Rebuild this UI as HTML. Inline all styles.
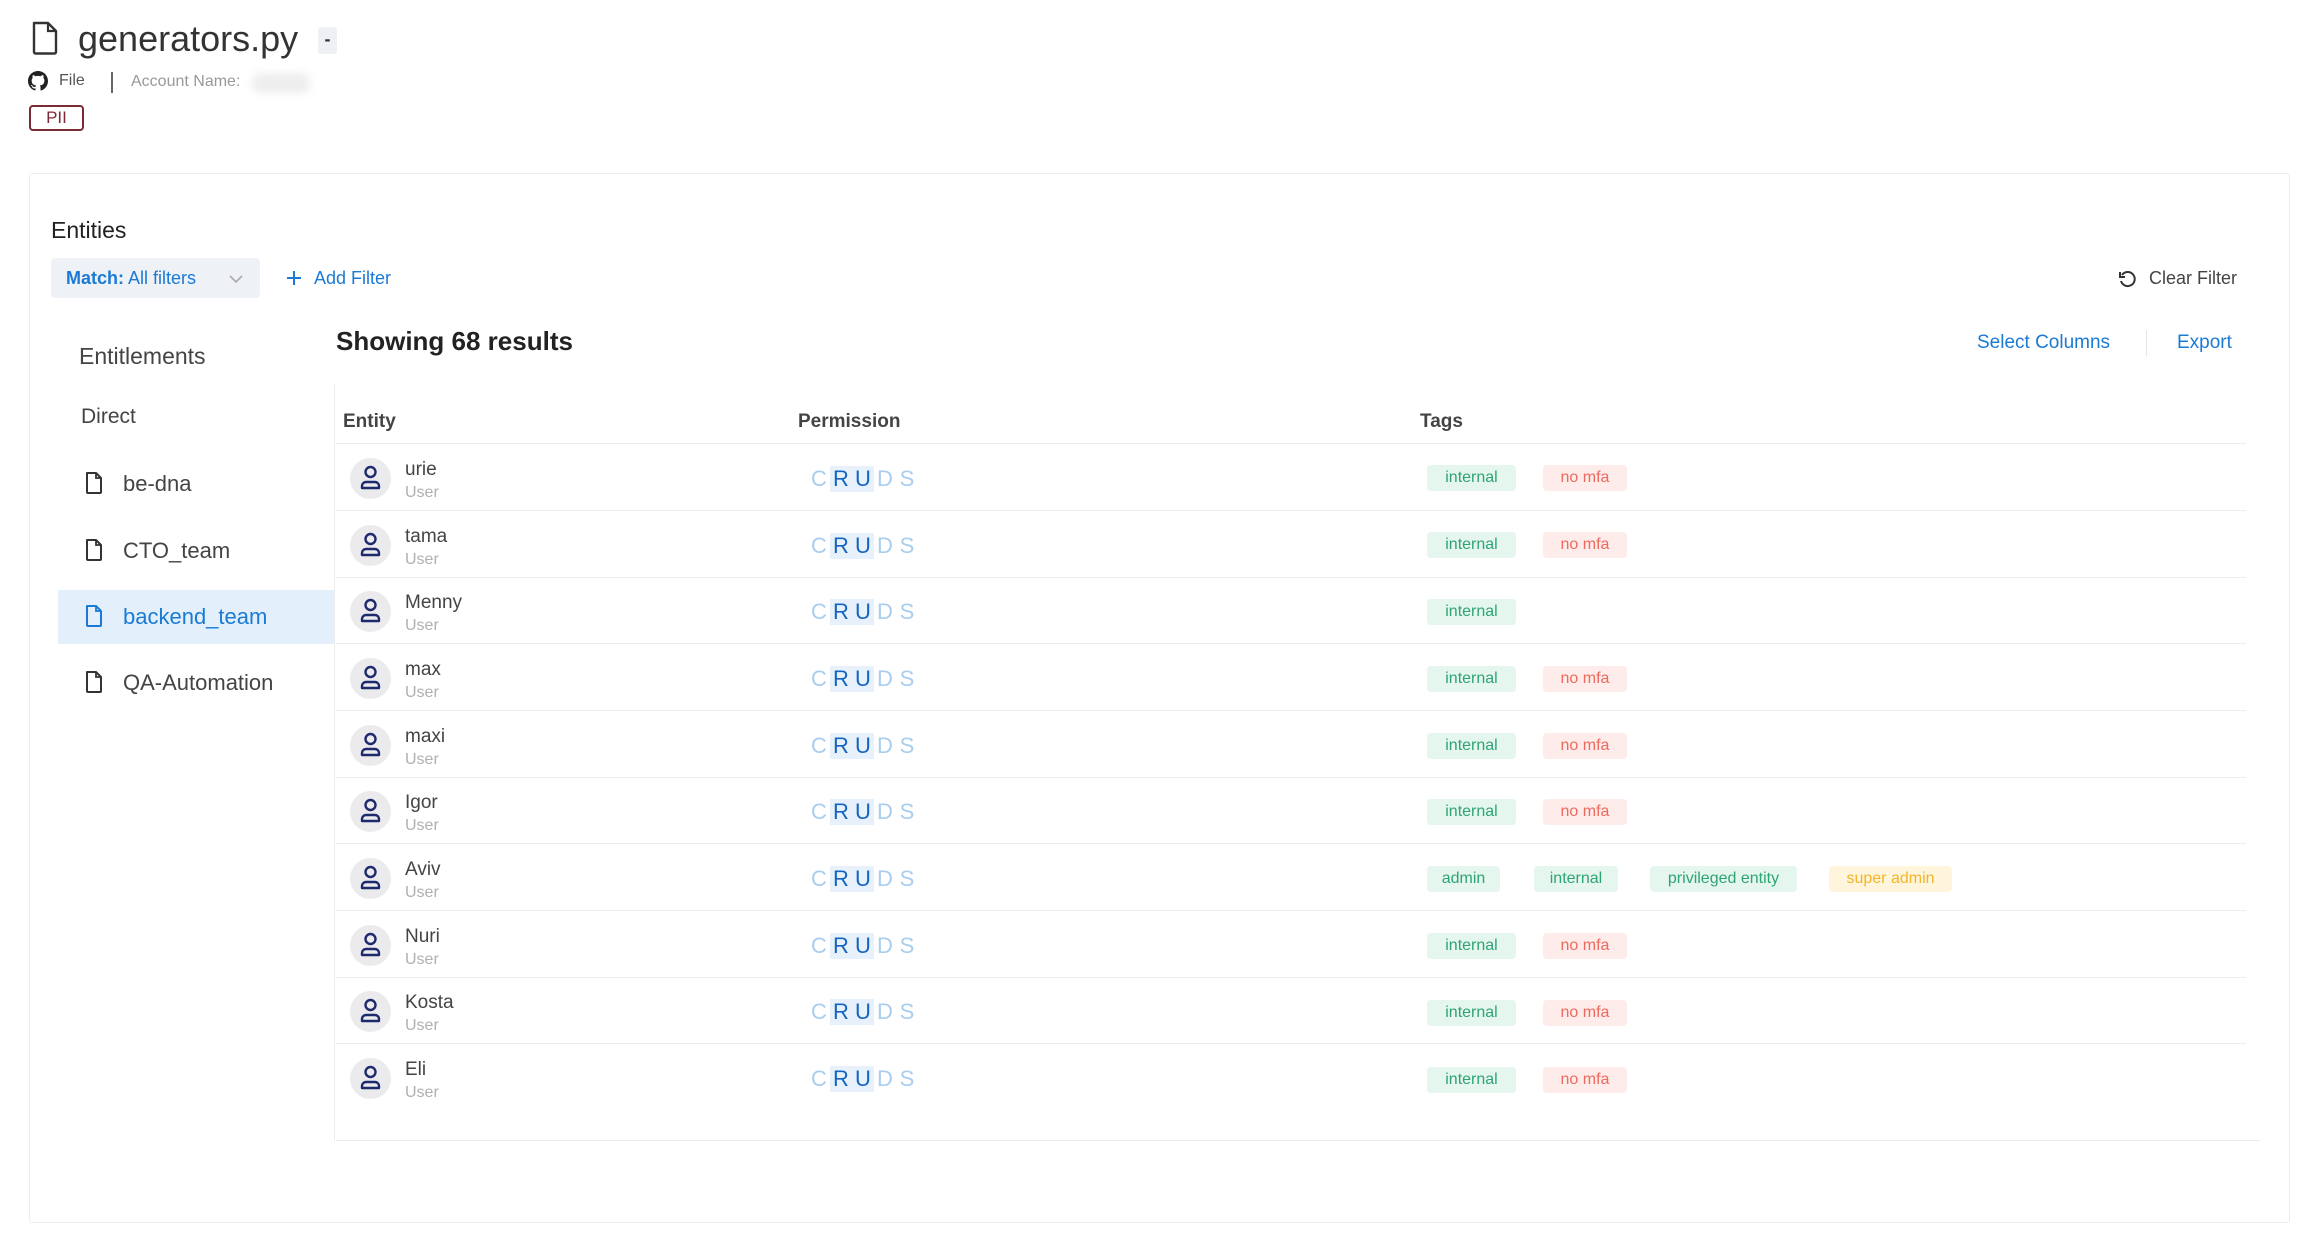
<!DOCTYPE html>
<html><head><meta charset="utf-8">
<style>
*{margin:0;padding:0;box-sizing:border-box}
body{width:2300px;height:1254px;background:#fff;font-family:"Liberation Sans",sans-serif;color:#333;position:relative;overflow:hidden}
.a{position:absolute;white-space:nowrap}
.card{position:absolute;left:29px;top:173px;width:2261px;height:1050px;border:1px solid #ececec;border-radius:3px}
.hl{position:absolute;height:1px;background:#ececec}
.tag{position:absolute;height:26px;line-height:26px;border-radius:4px;font-size:16px;text-align:center}
.g{background:#e5f6ee;color:#2ea473}
.r{background:#fdecea;color:#ee6a5e}
.y{background:#fff5dd;color:#f2b628}
.av{position:absolute;left:350px;width:41px;height:41px;border-radius:50%;background:#ebebee}
.nm{position:absolute;left:405px;font-size:19px;color:#444}
.us{position:absolute;left:405px;font-size:16px;color:#b0b0b0}
.cr{position:absolute;left:808px;font-size:22px;letter-spacing:0}
.cr span{display:inline-block;width:22px;text-align:center;color:#a8cdee}
.cr span.on{color:#1565c0;background:#e6f1fb}
.side{position:absolute;font-size:22px;color:#444}
</style></head><body>

<svg class="a" style="left:31px;top:21px" width="28" height="34" viewBox="0 0 28 34"><path d="M3 2h14l8 8v21a1.5 1.5 0 0 1-1.5 1.5h-19A1.5 1.5 0 0 1 3 31z" fill="none" stroke="#333" stroke-width="2.4" stroke-linejoin="round"/><path d="M17 2v8h8" fill="none" stroke="#333" stroke-width="2.2"/></svg>
<div class="a" style="left:78px;top:18px;font-size:36px;color:#333">generators.py</div>
<div class="a" style="left:318px;top:27px;width:19px;height:27px;background:#eef0f3;border-radius:3px;text-align:center;font-size:18px;line-height:25px;font-weight:bold">-</div>

<svg class="a" style="left:28px;top:71px" width="20" height="20" viewBox="0 0 16 16"><path fill="#222" d="M8 0C3.580 0 0 3.580 0 8c0 3.540 2.290 6.530 5.470 7.590.4.07.55-.17.55-.38v-1.340c-2.230.48-2.700-1.070-2.700-1.070-.36-.93-.89-1.170-.89-1.170-.73-.5.06-.49.06-.49.8.06 1.230.83 1.230.83.72 1.230 1.870.87 2.330.67.07-.52.28-.87.51-1.070-1.780-.2-3.640-.89-3.640-3.950 0-.87.31-1.590.82-2.150-.08-.2-.36-1.020.08-2.120 0 0 .67-.21 2.200.82a7.600 7.600 0 0 1 4 0c1.530-1.040 2.200-.82 2.200-.82.44 1.100.16 1.920.08 2.120.51.56.82 1.270.82 2.150 0 3.070-1.870 3.750-3.650 3.950.29.25.54.73.54 1.480v2.200c0 .21.15.46.55.38A8 8 0 0 0 16 8c0-4.420-3.580-8-8-8z"/></svg>
<div class="a" style="left:59px;top:72px;font-size:16px;color:#555">File</div>
<div class="a" style="left:111px;top:72px;width:2px;height:21px;background:#666"></div>
<div class="a" style="left:131px;top:73px;font-size:16px;color:#999">Account Name:</div>
<div class="a" style="left:252px;top:73px;width:58px;height:20px;background:#eee;border-radius:8px;filter:blur(4px)"></div>
<div class="a" style="left:29px;top:105px;width:55px;height:26px;border:2px solid #7a2b35;border-radius:4px;text-align:center;font-size:17px;line-height:22px;color:#7a2b35">PII</div>

<div class="card"></div>
<div class="a" style="left:51px;top:217px;font-size:23px;color:#222">Entities</div>
<div class="a" style="left:51px;top:258px;width:209px;height:40px;background:#eef1f6;border-radius:4px"></div>
<div class="a" style="left:66px;top:268px;font-size:18px;color:#1a7ad4"><b>Match:</b> All filters</div>
<svg class="a" style="left:228px;top:274px" width="16" height="10"><path d="M2 2l6 6 6-6" fill="none" stroke="#aaa" stroke-width="1.6"/></svg>
<svg class="a" style="left:286px;top:270px" width="16" height="16"><path d="M8 1v14M1 8h14" stroke="#1a7ad4" stroke-width="2"/></svg>
<div class="a" style="left:314px;top:268px;font-size:18px;color:#1a7ad4">Add Filter</div>

<svg class="a" style="left:2117px;top:269px" width="20" height="20" viewBox="0 0 20 20"><path d="M5 6a7 7 0 1 1-1 6" fill="none" stroke="#333" stroke-width="2"/><path d="M3 3v5h5" fill="none" stroke="#333" stroke-width="2"/></svg>
<div class="a" style="left:2149px;top:268px;font-size:18px;color:#444">Clear Filter</div>

<div class="side" style="left:79px;top:343px;font-size:23px">Entitlements</div>
<div class="side" style="left:81px;top:405px;font-size:21px">Direct</div>
<div class="a" style="left:58px;top:590px;width:276px;height:54px;background:#e3f0fb"></div>
<div class="a" style="left:334px;top:384px;width:1px;height:757px;background:#ececec"></div>

<svg class="a" style="left:84px;top:471px" width="20" height="24" viewBox="0 0 20 24"><path d="M3 2h9l5 5v14a1 1 0 0 1-1 1H4a1 1 0 0 1-1-1z" fill="none" stroke="#333" stroke-width="2" stroke-linejoin="round"/><path d="M12 2v5h5" fill="none" stroke="#333" stroke-width="1.8"/></svg>
<div class="side" style="left:123px;top:471px">be-dna</div>
<svg class="a" style="left:84px;top:538px" width="20" height="24" viewBox="0 0 20 24"><path d="M3 2h9l5 5v14a1 1 0 0 1-1 1H4a1 1 0 0 1-1-1z" fill="none" stroke="#333" stroke-width="2" stroke-linejoin="round"/><path d="M12 2v5h5" fill="none" stroke="#333" stroke-width="1.8"/></svg>
<div class="side" style="left:123px;top:538px">CTO_team</div>
<svg class="a" style="left:84px;top:604px" width="20" height="24" viewBox="0 0 20 24"><path d="M3 2h9l5 5v14a1 1 0 0 1-1 1H4a1 1 0 0 1-1-1z" fill="none" stroke="#1a7ad4" stroke-width="2" stroke-linejoin="round"/><path d="M12 2v5h5" fill="none" stroke="#1a7ad4" stroke-width="1.8"/></svg>
<div class="side" style="left:123px;top:604px;color:#1a7ad4">backend_team</div>
<svg class="a" style="left:84px;top:670px" width="20" height="24" viewBox="0 0 20 24"><path d="M3 2h9l5 5v14a1 1 0 0 1-1 1H4a1 1 0 0 1-1-1z" fill="none" stroke="#333" stroke-width="2" stroke-linejoin="round"/><path d="M12 2v5h5" fill="none" stroke="#333" stroke-width="1.8"/></svg>
<div class="side" style="left:123px;top:670px">QA-Automation</div>

<div class="a" style="left:336px;top:326px;font-size:26px;font-weight:bold;color:#222">Showing 68 results</div>
<div class="a" style="left:1977px;top:332px;font-size:19px;color:#1a7ad4">Select Columns</div>
<div class="a" style="left:2146px;top:330px;width:1px;height:26px;background:#e5e5e5"></div>
<div class="a" style="left:2177px;top:332px;font-size:19px;color:#1a7ad4">Export</div>

<div class="a" style="left:343px;top:411px;font-size:19px;font-weight:bold;color:#444">Entity</div>
<div class="a" style="left:798px;top:411px;font-size:19px;font-weight:bold;color:#444">Permission</div>
<div class="a" style="left:1420px;top:411px;font-size:19px;font-weight:bold;color:#444">Tags</div>
<div class="hl" style="left:336px;top:443px;width:1910px"></div>
<div class="hl" style="left:336px;top:510px;width:1910px"></div>
<div class="hl" style="left:336px;top:577px;width:1910px"></div>
<div class="hl" style="left:336px;top:643px;width:1910px"></div>
<div class="hl" style="left:336px;top:710px;width:1910px"></div>
<div class="hl" style="left:336px;top:777px;width:1910px"></div>
<div class="hl" style="left:336px;top:843px;width:1910px"></div>
<div class="hl" style="left:336px;top:910px;width:1910px"></div>
<div class="hl" style="left:336px;top:977px;width:1910px"></div>
<div class="hl" style="left:336px;top:1043px;width:1910px"></div>
<div class="hl" style="left:336px;top:1140px;width:1924px"></div>

<svg width="0" height="0" style="position:absolute"><defs><g id="u"><circle cx="20.5" cy="14" r="5" fill="none" stroke="#1d2a6b" stroke-width="2.4"/><path d="M12 30v-2a4 4 0 0 1 4-4h9a4 4 0 0 1 4 4v2z" fill="none" stroke="#1d2a6b" stroke-width="2.4" stroke-linejoin="round"/></g></defs></svg>

<div class="av" style="top:458px"><svg width="41" height="41"><use href="#u"/></svg></div>
<div class="nm" style="top:459px">urie</div><div class="us" style="top:484px">User</div>
<div class="cr" style="top:466px"><span>C</span><span class="on">R</span><span class="on">U</span><span>D</span><span>S</span></div>
<div class="tag g" style="left:1427px;top:465px;width:89px">internal</div><div class="tag r" style="left:1543px;top:465px;width:84px">no mfa</div>

<div class="av" style="top:525px"><svg width="41" height="41"><use href="#u"/></svg></div>
<div class="nm" style="top:526px">tama</div><div class="us" style="top:551px">User</div>
<div class="cr" style="top:533px"><span>C</span><span class="on">R</span><span class="on">U</span><span>D</span><span>S</span></div>
<div class="tag g" style="left:1427px;top:532px;width:89px">internal</div><div class="tag r" style="left:1543px;top:532px;width:84px">no mfa</div>

<div class="av" style="top:591px"><svg width="41" height="41"><use href="#u"/></svg></div>
<div class="nm" style="top:592px">Menny</div><div class="us" style="top:617px">User</div>
<div class="cr" style="top:599px"><span>C</span><span class="on">R</span><span class="on">U</span><span>D</span><span>S</span></div>
<div class="tag g" style="left:1427px;top:599px;width:89px">internal</div>

<div class="av" style="top:658px"><svg width="41" height="41"><use href="#u"/></svg></div>
<div class="nm" style="top:659px">max</div><div class="us" style="top:684px">User</div>
<div class="cr" style="top:666px"><span>C</span><span class="on">R</span><span class="on">U</span><span>D</span><span>S</span></div>
<div class="tag g" style="left:1427px;top:666px;width:89px">internal</div><div class="tag r" style="left:1543px;top:666px;width:84px">no mfa</div>

<div class="av" style="top:725px"><svg width="41" height="41"><use href="#u"/></svg></div>
<div class="nm" style="top:726px">maxi</div><div class="us" style="top:751px">User</div>
<div class="cr" style="top:733px"><span>C</span><span class="on">R</span><span class="on">U</span><span>D</span><span>S</span></div>
<div class="tag g" style="left:1427px;top:733px;width:89px">internal</div><div class="tag r" style="left:1543px;top:733px;width:84px">no mfa</div>

<div class="av" style="top:791px"><svg width="41" height="41"><use href="#u"/></svg></div>
<div class="nm" style="top:792px">Igor</div><div class="us" style="top:817px">User</div>
<div class="cr" style="top:799px"><span>C</span><span class="on">R</span><span class="on">U</span><span>D</span><span>S</span></div>
<div class="tag g" style="left:1427px;top:799px;width:89px">internal</div><div class="tag r" style="left:1543px;top:799px;width:84px">no mfa</div>

<div class="av" style="top:858px"><svg width="41" height="41"><use href="#u"/></svg></div>
<div class="nm" style="top:859px">Aviv</div><div class="us" style="top:884px">User</div>
<div class="cr" style="top:866px"><span>C</span><span class="on">R</span><span class="on">U</span><span>D</span><span>S</span></div>
<div class="tag g" style="left:1427px;top:866px;width:73px">admin</div><div class="tag g" style="left:1534px;top:866px;width:84px">internal</div><div class="tag g" style="left:1650px;top:866px;width:147px">privileged entity</div><div class="tag y" style="left:1829px;top:866px;width:123px">super admin</div>

<div class="av" style="top:925px"><svg width="41" height="41"><use href="#u"/></svg></div>
<div class="nm" style="top:926px">Nuri</div><div class="us" style="top:951px">User</div>
<div class="cr" style="top:933px"><span>C</span><span class="on">R</span><span class="on">U</span><span>D</span><span>S</span></div>
<div class="tag g" style="left:1427px;top:933px;width:89px">internal</div><div class="tag r" style="left:1543px;top:933px;width:84px">no mfa</div>

<div class="av" style="top:991px"><svg width="41" height="41"><use href="#u"/></svg></div>
<div class="nm" style="top:992px">Kosta</div><div class="us" style="top:1017px">User</div>
<div class="cr" style="top:999px"><span>C</span><span class="on">R</span><span class="on">U</span><span>D</span><span>S</span></div>
<div class="tag g" style="left:1427px;top:1000px;width:89px">internal</div><div class="tag r" style="left:1543px;top:1000px;width:84px">no mfa</div>

<div class="av" style="top:1058px"><svg width="41" height="41"><use href="#u"/></svg></div>
<div class="nm" style="top:1059px">Eli</div><div class="us" style="top:1084px">User</div>
<div class="cr" style="top:1066px"><span>C</span><span class="on">R</span><span class="on">U</span><span>D</span><span>S</span></div>
<div class="tag g" style="left:1427px;top:1067px;width:89px">internal</div><div class="tag r" style="left:1543px;top:1067px;width:84px">no mfa</div>

</body></html>
